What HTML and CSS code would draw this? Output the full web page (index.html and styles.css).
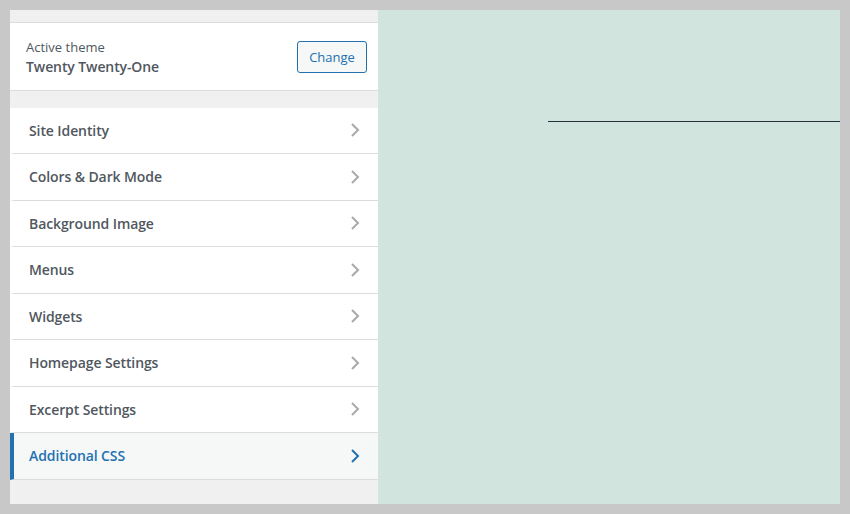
FILE: index.html
```html
<!DOCTYPE html>
<html lang="en">
<head>
    <meta charset="UTF-8">
    <meta name="viewport" content="width=device-width, initial-scale=1.0">
    <title>Customize</title>
    <link rel="stylesheet" href="styles.css">
</head>
<body>
    <div class="frame">
        <div class="sidebar">
            <div class="top-strip"></div>

            <div class="theme-info">
                <div class="theme-text">
                    <span class="theme-label">Active theme</span>
                    <span class="theme-name">Twenty Twenty-One</span>
                </div>
                <button class="change-btn">Change</button>
            </div>

            <ul class="sections">
                <li class="section">Site Identity <svg class="chevron" width="10" height="16" viewBox="0 0 10 16"><path d="M2 2l6 6-6 6"/></svg></li>
                <li class="section">Colors &amp; Dark Mode <svg class="chevron" width="10" height="16" viewBox="0 0 10 16"><path d="M2 2l6 6-6 6"/></svg></li>
                <li class="section">Background Image <svg class="chevron" width="10" height="16" viewBox="0 0 10 16"><path d="M2 2l6 6-6 6"/></svg></li>
                <li class="section">Menus <svg class="chevron" width="10" height="16" viewBox="0 0 10 16"><path d="M2 2l6 6-6 6"/></svg></li>
                <li class="section">Widgets <svg class="chevron" width="10" height="16" viewBox="0 0 10 16"><path d="M2 2l6 6-6 6"/></svg></li>
                <li class="section">Homepage Settings <svg class="chevron" width="10" height="16" viewBox="0 0 10 16"><path d="M2 2l6 6-6 6"/></svg></li>
                <li class="section">Excerpt Settings <svg class="chevron" width="10" height="16" viewBox="0 0 10 16"><path d="M2 2l6 6-6 6"/></svg></li>
                <li class="section active">Additional CSS <svg class="chevron" width="10" height="16" viewBox="0 0 10 16"><path d="M2 2l6 6-6 6"/></svg></li>
            </ul>
        </div>

        <div class="preview">
            <div class="rule"></div>
        </div>
    </div>
</body>
</html>
```

FILE: styles.css
```css
* { margin: 0; padding: 0; box-sizing: border-box; }
body { background: #c8c8c8; padding: 10px; font-family: "Open Sans", "Noto Sans", sans-serif; }
.frame { display: flex; height: 494px; }

.sidebar { width: 368px; background: #f0f0f1; display: flex; flex-direction: column; }
.top-strip { height: 12px; }

.theme-info { display: flex; align-items: center; justify-content: space-between; height: 69px; padding: 0 11px 0 16px; background: #fff; border-top: 1px solid #dcdcde; border-bottom: 1px solid #dcdcde; }
.theme-text { display: flex; flex-direction: column; gap: 1px; }
.theme-label { font-size: 13px; color: #50575e; }
.theme-name { font-size: 14px; font-weight: 600; color: #50575e; letter-spacing: -0.1px; }
.change-btn { width: 70px; height: 32px; background: #f6f7f7; color: #2271b1; border: 1px solid #2271b1; border-radius: 3px; font-family: inherit; font-size: 13px; }

.sections { list-style: none; margin-top: 16.5px; }
.section { display: flex; align-items: center; justify-content: space-between; height: 46.5px; padding: 0 18px 0 15px; background: #fff; border-left: 4px solid #fff; border-bottom: 1px solid #dcdcde; font-size: 14px; font-weight: 600; letter-spacing: -0.1px; color: #50575e; }
.chevron { fill: none; stroke: #a7aaad; stroke-width: 2; }
.section.active { background: #f6f7f7; border-left-color: #2271b1; color: #2271b1; }
.section.active .chevron { stroke: #2271b1; }

.preview { flex: 1; background: #d1e4dd; padding-top: 111px; }
.rule { height: 1px; margin-left: 170px; background: #28303d; }
```
